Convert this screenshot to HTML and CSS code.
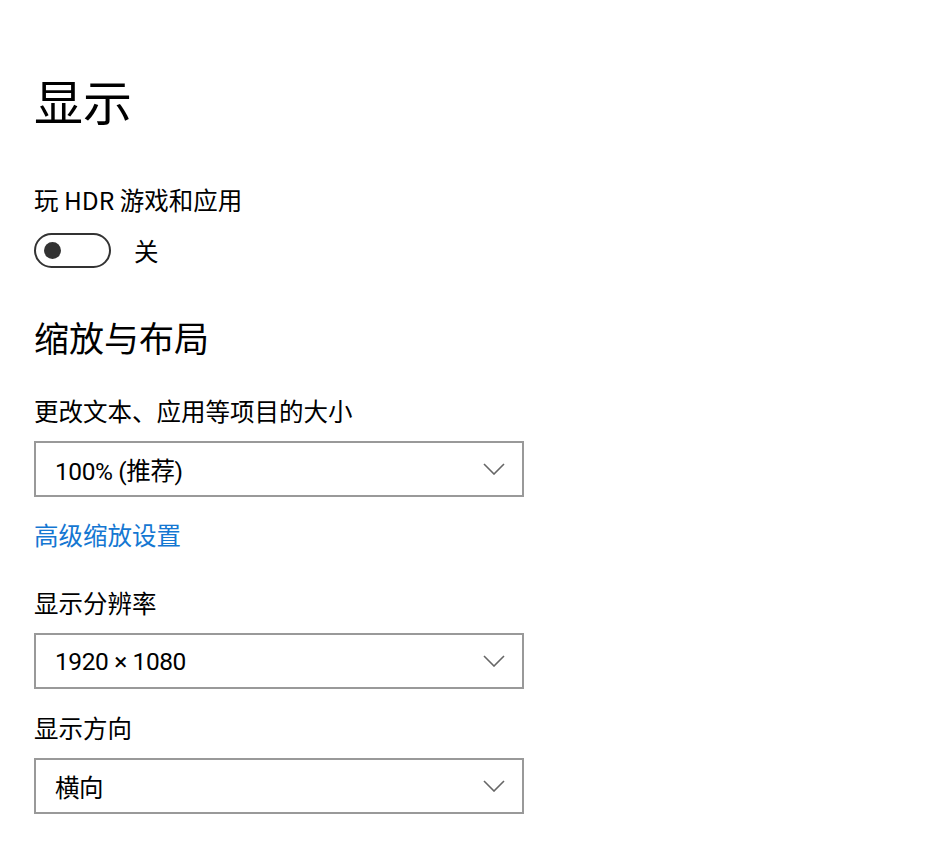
FILE: index.html
```html
<!DOCTYPE html>
<html lang="zh-CN">
<head>
  <meta charset="UTF-8" />
  <title>显示</title>
  <link rel="stylesheet" href="styles.css">
</head>
<body>
  <div class="page">
    <h1 class="page-title">显示</h1>

    <div class="label hdr-label">玩 HDR 游戏和应用</div>
    <div class="toggle-row">
      <span class="toggle"><span class="knob"></span></span>
      <span class="toggle-text">关</span>
    </div>

    <h2 class="section-title">缩放与布局</h2>

    <div class="label first">更改文本、应用等项目的大小</div>
    <div class="select">
      <span class="select-value">100% (推荐)</span>
      <svg class="chevron" width="22" height="12" viewBox="0 0 22 12"><path d="M1 1 L11 11 L21 1" fill="none" stroke="#666" stroke-width="1.6"/></svg>
    </div>

    <a class="link" href="#">高级缩放设置</a>

    <div class="label after-link">显示分辨率</div>
    <div class="select">
      <span class="select-value">1920 × 1080</span>
      <svg class="chevron" width="22" height="12" viewBox="0 0 22 12"><path d="M1 1 L11 11 L21 1" fill="none" stroke="#666" stroke-width="1.6"/></svg>
    </div>

    <div class="label">显示方向</div>
    <div class="select">
      <span class="select-value">横向</span>
      <svg class="chevron" width="22" height="12" viewBox="0 0 22 12"><path d="M1 1 L11 11 L21 1" fill="none" stroke="#666" stroke-width="1.6"/></svg>
    </div>
  </div>
</body>
</html>
```

FILE: styles.css
```css
* {
  margin: 0;
  padding: 0;
  box-sizing: border-box;
}
body {
  background: #fff;
  color: #000;
  font-family: "Noto Sans CJK SC", "Noto Sans", sans-serif;
}
.page {
  padding: 70px 0 0 34px;
}
.page-title {
  font-size: 49px;
  font-weight: 400;
  line-height: 60px;
}
.label {
  font-size: 24.5px;
  line-height: 30px;
  margin-top: 24px;
}
.hdr-label {
  margin-top: 55px;
}
.label.first {
  margin-top: 37px;
}
.label.after-link {
  margin-top: 38px;
}
.toggle-row {
  display: flex;
  align-items: center;
  gap: 23px;
  margin-top: 18px;
  height: 35px;
}
.toggle {
  display: flex;
  align-items: center;
  width: 77px;
  height: 35px;
  border: 2px solid #333;
  border-radius: 18px;
  padding-left: 8px;
}
.knob {
  width: 17px;
  height: 17px;
  border-radius: 50%;
  background: #333;
}
.toggle-text {
  font-size: 24.5px;
  line-height: 30px;
}
.section-title {
  font-size: 35px;
  font-weight: 400;
  line-height: 44px;
  margin-top: 47px;
}
.select {
  display: flex;
  align-items: center;
  justify-content: space-between;
  width: 490px;
  height: 56px;
  margin-top: 15px;
  border: 2px solid #999;
  padding: 0 17px 0 19px;
  font-size: 24.5px;
}
.select-value {
  font-family: Roboto, "Noto Sans CJK SC", sans-serif;
  letter-spacing: -0.4px;
}
.chevron {
  display: block;
}
.link {
  display: block;
  width: max-content;
  margin-top: 23px;
  font-size: 24.5px;
  line-height: 30px;
  color: #1477d2;
  text-decoration: none;
}
```
